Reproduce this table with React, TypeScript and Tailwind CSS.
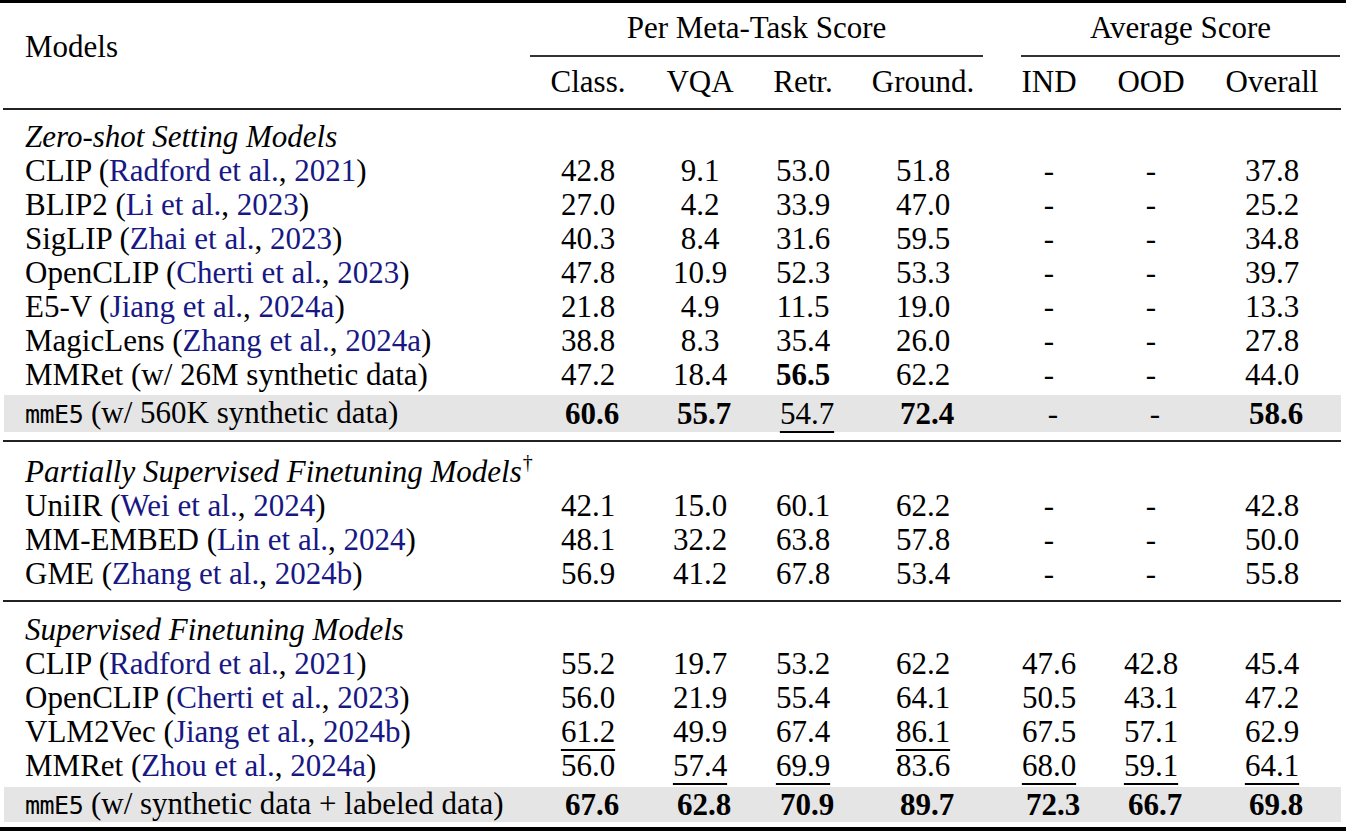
import React from "react";

const GRID = "grid grid-cols-[530px_116px_108px_98px_142px_110px_94px_148px]";

type Row = {
  name: string;
  author?: string;
  year?: string;
  mono?: string;
  vals: string[];
};

function Cell({ v }: { v: string }) {
  let t = v;
  let bold = false;
  let und = false;
  if (t.startsWith("b:")) {
    bold = true;
    t = t.slice(2);
  }
  if (t.startsWith("u:")) {
    und = true;
    t = t.slice(2);
  }
  return (
    <div className="text-center">
      <span
        className={
          (bold ? "font-bold " : "") +
          (und ? "underline underline-offset-[7px] decoration-[length:1.5px]" : "")
        }
      >
        {t}
      </span>
    </div>
  );
}

function ModelName({ r }: { r: Row }) {
  if (r.mono) {
    return (
      <div className="pl-[25px] whitespace-nowrap">
        <span className="font-['DejaVu_Sans_Mono',monospace] text-[25px] tracking-[-0.5px]">{r.mono}</span>
        <span> {r.name}</span>
      </div>
    );
  }
  if (r.author) {
    return (
      <div className="pl-[25px] whitespace-nowrap">
        {r.name} (<span className="text-[#181885]">{r.author}</span>,{" "}
        <span className="text-[#181885]">{r.year}</span>)
      </div>
    );
  }
  return <div className="pl-[25px] whitespace-nowrap">{r.name}</div>;
}

function DataRow({ r }: { r: Row }) {
  return (
    <div className={`${GRID} h-[34px] items-center`}>
      <ModelName r={r} />
      {r.vals.map((v, i) => (
        <Cell key={i} v={v} />
      ))}
    </div>
  );
}

function ShadedRow({ r, h }: { r: Row; h: string }) {
  return (
    <div className={`${GRID} ${h} items-center bg-[#e5e5e5] ml-[4px] mr-[5px]`}>
      <div className="-ml-[4px]">
        <ModelName r={r} />
      </div>
      {r.vals.map((v, i) => (
        <Cell key={i} v={v} />
      ))}
    </div>
  );
}

const zeroShot: Row[] = [
  { name: "CLIP", author: "Radford et al.", year: "2021", vals: ["42.8", "9.1", "53.0", "51.8", "-", "-", "37.8"] },
  { name: "BLIP2", author: "Li et al.", year: "2023", vals: ["27.0", "4.2", "33.9", "47.0", "-", "-", "25.2"] },
  { name: "SigLIP", author: "Zhai et al.", year: "2023", vals: ["40.3", "8.4", "31.6", "59.5", "-", "-", "34.8"] },
  { name: "OpenCLIP", author: "Cherti et al.", year: "2023", vals: ["47.8", "10.9", "52.3", "53.3", "-", "-", "39.7"] },
  { name: "E5-V", author: "Jiang et al.", year: "2024a", vals: ["21.8", "4.9", "11.5", "19.0", "-", "-", "13.3"] },
  { name: "MagicLens", author: "Zhang et al.", year: "2024a", vals: ["38.8", "8.3", "35.4", "26.0", "-", "-", "27.8"] },
  { name: "MMRet (w/ 26M synthetic data)", vals: ["47.2", "18.4", "b:56.5", "62.2", "-", "-", "44.0"] },
];
const zeroShotOurs: Row = {
  mono: "mmE5",
  name: "(w/ 560K synthetic data)",
  vals: ["b:60.6", "b:55.7", "u:54.7", "b:72.4", "-", "-", "b:58.6"],
};

const partial: Row[] = [
  { name: "UniIR", author: "Wei et al.", year: "2024", vals: ["42.1", "15.0", "60.1", "62.2", "-", "-", "42.8"] },
  { name: "MM-EMBED", author: "Lin et al.", year: "2024", vals: ["48.1", "32.2", "63.8", "57.8", "-", "-", "50.0"] },
  { name: "GME", author: "Zhang et al.", year: "2024b", vals: ["56.9", "41.2", "67.8", "53.4", "-", "-", "55.8"] },
];

const supervised: Row[] = [
  { name: "CLIP", author: "Radford et al.", year: "2021", vals: ["55.2", "19.7", "53.2", "62.2", "47.6", "42.8", "45.4"] },
  { name: "OpenCLIP", author: "Cherti et al.", year: "2023", vals: ["56.0", "21.9", "55.4", "64.1", "50.5", "43.1", "47.2"] },
  { name: "VLM2Vec", author: "Jiang et al.", year: "2024b", vals: ["u:61.2", "49.9", "67.4", "u:86.1", "67.5", "57.1", "62.9"] },
  { name: "MMRet", author: "Zhou et al.", year: "2024a", vals: ["56.0", "u:57.4", "u:69.9", "83.6", "u:68.0", "u:59.1", "u:64.1"] },
];
const supervisedOurs: Row = {
  mono: "mmE5",
  name: "(w/ synthetic data + labeled data)",
  vals: ["b:67.6", "b:62.8", "b:70.9", "b:89.7", "b:72.3", "b:66.7", "b:69.8"],
};

function SectionTitle({ children, pt }: { children: React.ReactNode; pt: string }) {
  return (
    <div className={`${pt}`}>
      <div className="h-[34px] pl-[25px] italic whitespace-nowrap">{children}</div>
    </div>
  );
}

export default function App() {
  return (
    <div className="w-[1346px] h-[835px] bg-white text-black font-['Liberation_Serif',serif] text-[31px] leading-[34px] overflow-hidden">
      {/* top rule */}
      <div className="h-[3px] bg-black" />
      {/* header */}
      <div className={`${GRID} grid-rows-[34px_20px_34px] pt-[8px] pb-[9px]`}>
        <div className="row-span-3 self-start mt-[19px] pl-[25px]">Models</div>
        <div className="col-span-4 text-center mr-[11px]">Per Meta-Task Score</div>
        <div className="col-span-3 text-center ml-[27px] mr-[6px]">Average Score</div>
        <div className="col-span-4 self-center h-[2px] bg-[#333] mr-[11px] mt-[1px]" />
        <div className="col-span-3 self-center h-[2px] bg-[#333] ml-[27px] mr-[6px] mt-[1px]" />
        <div className="text-center">Class.</div>
        <div className="text-center">VQA</div>
        <div className="text-center">Retr.</div>
        <div className="text-center">Ground.</div>
        <div className="text-center">IND</div>
        <div className="text-center">OOD</div>
        <div className="text-center">Overall</div>
      </div>
      <div className="h-[2px] bg-[#222] ml-[3px] mr-[5px]" />

      {/* zero-shot */}
      <SectionTitle pt="pt-[10px]">Zero-shot Setting Models</SectionTitle>
      {zeroShot.map((r, i) => (
        <DataRow key={i} r={r} />
      ))}
      <div className="pt-[3px]">
        <ShadedRow r={zeroShotOurs} h="h-[37px]" />
      </div>
      <div className="h-[2px] bg-[#222] ml-[3px] mr-[5px] mt-[8px]" />

      {/* partial */}
      <SectionTitle pt="pt-[13px]">
        Partially Supervised Finetuning Models
        <span className="not-italic text-[20px] leading-none align-top relative -top-[3px] ml-[1px]">†</span>
      </SectionTitle>
      {partial.map((r, i) => (
        <DataRow key={i} r={r} />
      ))}
      <div className="h-[2px] bg-[#222] ml-[3px] mr-[5px] mt-[9px]" />

      {/* supervised */}
      <SectionTitle pt="pt-[11px]">Supervised Finetuning Models</SectionTitle>
      {supervised.map((r, i) => (
        <DataRow key={i} r={r} />
      ))}
      <div className="pt-[4px]">
        <ShadedRow r={supervisedOurs} h="h-[35px]" />
      </div>
      <div className="h-[4px] bg-black mt-[5px]" />
    </div>
  );
}
